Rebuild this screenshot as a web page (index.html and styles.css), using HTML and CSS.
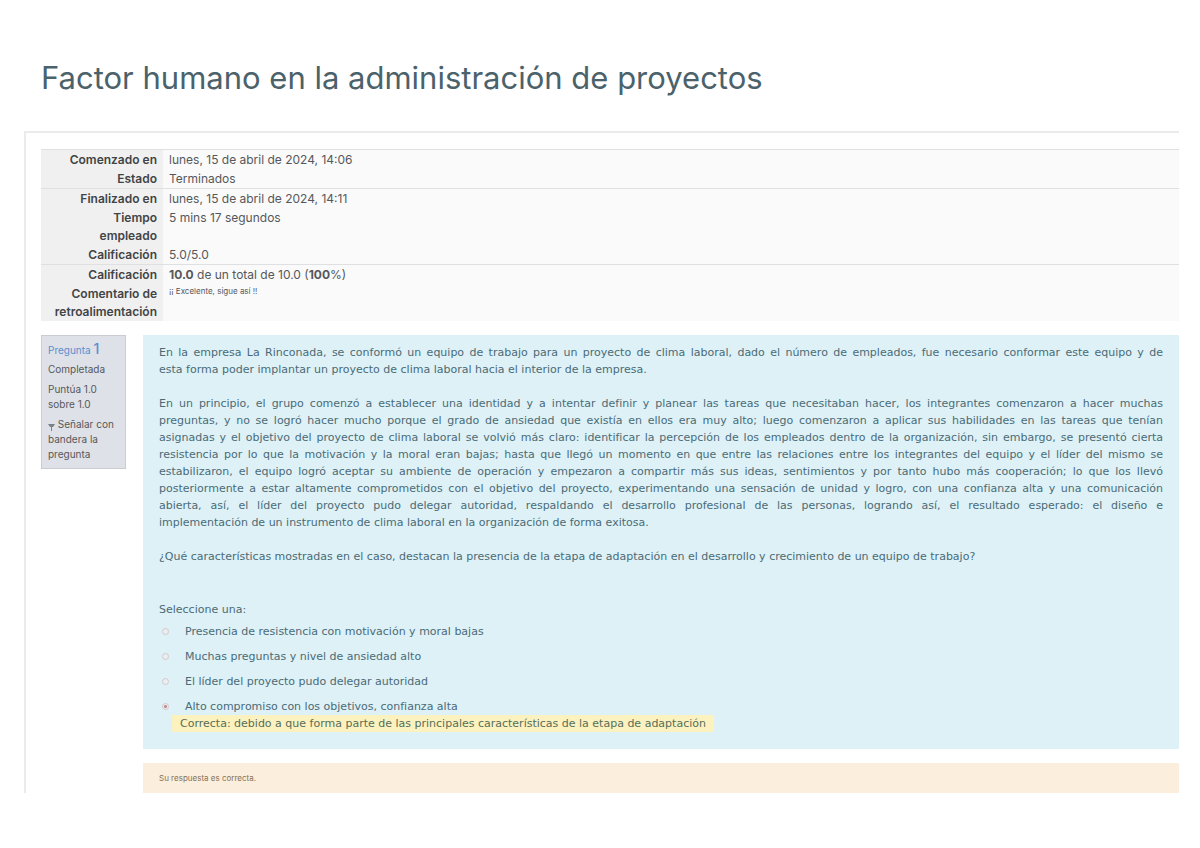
FILE: index.html
```html
<!DOCTYPE html>
<html lang="es">

<head>
  <meta charset="UTF-8" />
  <meta name="viewport" content="width=device-width, initial-scale=1.0"/>
  <title>Factor humano en la administración de proyectos</title>
  <link rel="stylesheet" href="styles.css">
</head>

<body>
  <h1>Factor humano en la administración de proyectos</h1>
  <main class="container">
    <table class="summary">
      <tbody>
        <tr class="line">
          <th scope="row">Comenzado en</th>
          <td>lunes, 15 de abril de 2024, 14:06</td>
        </tr>
        <tr>
          <th scope="row">Estado</th>
          <td>Terminados</td>
        </tr>
        <tr class="line">
          <th scope="row">Finalizado en</th>
          <td>lunes, 15 de abril de 2024, 14:11</td>
        </tr>
        <tr>
          <th scope="row">Tiempo<br>empleado</th>
          <td>5 mins 17 segundos</td>
        </tr>
        <tr>
          <th scope="row">Calificación</th>
          <td>5.0/5.0</td>
        </tr>
        <tr class="line">
          <th scope="row">Calificación</th>
          <td><b>10.0</b> de un total de 10.0 (<b>100</b>%)</td>
        </tr>
        <tr>
          <th scope="row">Comentario de retroalimentación</th>
          <td class="comment">¡¡ Excelente, sigue así !!</td>
        </tr>
      </tbody>
    </table>

    <div class="question">
      <aside class="info">
        <h2>Pregunta <span>1</span></h2>
        <p>Completada</p>
        <p>Puntúa 1.0 sobre 1.0</p>
        <p class="flag">
          <svg width="7" height="8" viewBox="0 0 7 8" aria-hidden="true">
            <path d="M0 1h7L5 4H4v4H3V4H2z" fill="#7b8087"/>
          </svg>
          Señalar con bandera la pregunta
        </p>
      </aside>

      <div class="content">
        <div class="formulation">
          <p>
            En la empresa La Rinconada, se conformó un equipo de trabajo para un proyecto de clima laboral, dado el número de empleados, fue necesario conformar este equipo y de
            <span class="last">esta forma poder implantar un proyecto de clima laboral hacia el interior de la empresa.</span>
          </p>
          <p>
            En un principio, el grupo comenzó a establecer una identidad y a intentar definir y planear las tareas que necesitaban hacer, los integrantes comenzaron a hacer muchas<br>
            preguntas, y no se logró hacer mucho porque el grado de ansiedad que existía en ellos era muy alto; luego comenzaron a aplicar sus habilidades en las tareas que tenían<br>
            asignadas y el objetivo del proyecto de clima laboral se volvió más claro: identificar la percepción de los empleados dentro de la organización, sin embargo, se presentó cierta<br>
            resistencia por lo que la motivación y la moral eran bajas; hasta que llegó un momento en que entre las relaciones entre los integrantes del equipo y el líder del mismo se<br>
            estabilizaron, el equipo logró aceptar su ambiente de operación y empezaron a compartir más sus ideas, sentimientos y por tanto hubo más cooperación; lo que los llevó<br>
            posteriormente a estar altamente comprometidos con el objetivo del proyecto, experimentando una sensación de unidad y logro, con una confianza alta y una comunicación<br>
            abierta, así, el líder del proyecto pudo delegar autoridad, respaldando el desarrollo profesional de las personas, logrando así, el resultado esperado: el diseño e
            <span class="last">implementación de un instrumento de clima laboral en la organización de forma exitosa.</span>
          </p>
          <p><span class="last">¿Qué características mostradas en el caso, destacan la presencia de la etapa de adaptación en el desarrollo y crecimiento de un equipo de trabajo?</span></p>

          <fieldset>
            <legend>Seleccione una:</legend>
            <div class="answer">
              <input type="radio" name="answer" id="answer0">
              <label for="answer0">Presencia de resistencia con motivación y moral bajas</label>
            </div>
            <div class="answer">
              <input type="radio" name="answer" id="answer1">
              <label for="answer1">Muchas preguntas y nivel de ansiedad alto</label>
            </div>
            <div class="answer">
              <input type="radio" name="answer" id="answer2">
              <label for="answer2">El líder del proyecto pudo delegar autoridad</label>
            </div>
            <div class="answer">
              <input type="radio" name="answer" id="answer3" checked>
              <label for="answer3">Alto compromiso con los objetivos, confianza alta</label>
            </div>
            <div class="feedback">Correcta: debido a que forma parte de las principales características de la etapa de adaptación</div>
          </fieldset>
        </div>
        <div class="outcome">Su respuesta es correcta.</div>
      </div>
    </div>
  </main>
</body>

</html>
```

FILE: styles.css
```css
* { box-sizing: border-box; }
body { margin: 0; padding: 60px 21px 54px 24px; font-family: Inter, sans-serif; font-size: 12px; line-height: 18px; color: #55585b; background: #ffffff; }
h1 { margin: 0 0 35px; padding-left: 17px; font-size: 31px; line-height: 36px; font-weight: 400; color: #4b626b; }
.container { border-top: 2px solid #ebebeb; border-left: 2px solid #ebebeb; padding: 16px 0 0 15px; }

.summary { width: 100%; border-spacing: 0; margin-bottom: 14px; }
.summary th, .summary td { padding: 1px 6px 0; vertical-align: top; }
.summary th { width: 122px; background: #f0f0f0; text-align: right; font-weight: 600; color: #414447; }
.summary td { background: #fafafa; }
.summary .line th, .summary .line td { border-top: 1px solid #dfe0e1; }
.summary .comment { font-size: 8px; line-height: 12px; }

.question { display: flex; align-items: flex-start; gap: 17px; }
.info { width: 85px; flex-shrink: 0; padding: 5px 6px 6px; background: #dee1e7; border: 1px solid #c9ccd0; font-size: 10px; line-height: 15px; }
.info h2 { margin: 0 0 4px; font-size: 10px; line-height: 16px; font-weight: 400; color: #5b8fd0; }
.info h2 span { font-size: 14px; font-weight: 500; }
.info p { margin: 0 0 5px; }
.info .flag { margin: 0; }
.info svg { vertical-align: -3px; }

.content { flex-grow: 1; min-width: 0; }
.formulation { padding: 9px 16px 17px; background: #def1f7; font-family: "DejaVu Sans", sans-serif; font-size: 11px; line-height: 17px; color: #4a6b76; }
.formulation p { margin: 0 0 17px; text-align: justify; text-align-last: justify; }
.last { display: block; text-align-last: left; }
fieldset { margin: 36px 0 0; padding: 0; border: 0; min-width: 0; }
legend { padding: 0; margin-bottom: 5px; }
.answer { display: flex; align-items: center; gap: 16px; margin-bottom: 8px; }
.answer input { appearance: none; width: 7px; height: 7px; margin: 0 0 0 3px; border: 1px solid #d8c6ca; border-radius: 50%; background: #e8eff2; }
.answer input:checked { background: radial-gradient(#c08890 1px, #e8eff2 2px); }
.feedback { width: fit-content; margin: -8px 0 0 13px; padding: 0 8px; background: #fcf2c0; color: #566e58; }
.outcome { margin-top: 14px; padding: 7px 16px; background: #fbeedc; font-size: 8px; line-height: 16px; color: #857258; }
```
